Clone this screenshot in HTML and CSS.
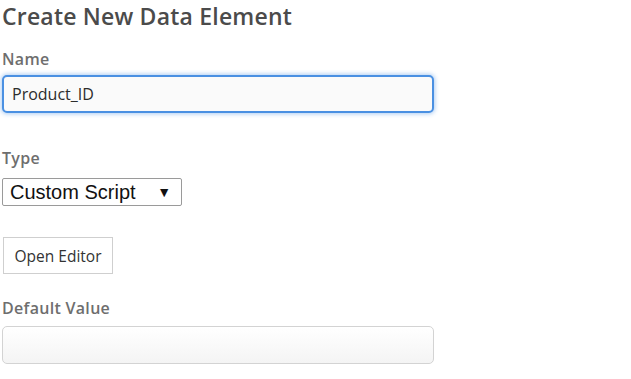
FILE: index.html
```html
<!DOCTYPE html>
<html>
<head>
<meta charset="utf-8">
<link rel="stylesheet" href="styles.css">
</head>
<body>
<div class="page">
  <h1 class="title">Create New Data Element</h1>
  <label class="label label-name">Name</label>
  <div class="input input-focus">Product_ID</div>
  <label class="label label-type">Type</label>
  <div class="select"><span>Custom Script</span><span class="arrow">▼</span></div>
  <button class="btn">Open Editor</button>
  <label class="label label-default">Default Value</label>
  <div class="input input-empty"></div>
</div>
</body>
</html>
```

FILE: styles.css
```css
html, body {
  margin: 0;
  padding: 0;
  background: #ffffff;
}
.page {
  display: flex;
  flex-direction: column;
  align-items: flex-start;
  padding-left: 2px;
  font-family: "Open Sans", sans-serif;
}
.title {
  margin: 0;
  font-size: 23px;
  font-weight: 600;
  letter-spacing: 0.2px;
  color: #4b4b4b;
  line-height: 32px;
}
.label {
  display: block;
  font-size: 16px;
  font-weight: 600;
  letter-spacing: 0.3px;
  color: #6e6e6e;
  line-height: 22px;
}
.label-name { margin-top: 16px; }
.label-type { margin-top: 34px; }
.label-default { margin-top: 23px; }
.input {
  box-sizing: border-box;
  width: 432px;
  height: 38px;
  border-radius: 5px;
  border: 1px solid #d3d3d3;
  background: linear-gradient(#ffffff, #f4f4f4);
  font-size: 16px;
  line-height: 36px;
  padding-left: 9px;
  color: #2c2c2c;
}
.input-focus {
  margin-top: 5px;
  border: 2px solid #4a90e2;
  line-height: 34px;
  padding-left: 8px;
  background: #fafafa;
  box-shadow: 0 0 4px 1px rgba(74, 144, 226, 0.45);
}
.input-empty { margin-top: 7px; }
.select {
  box-sizing: border-box;
  margin-top: 9px;
  width: 180px;
  height: 28px;
  border: 1px solid #9a9a9a;
  border-radius: 2px;
  display: flex;
  align-items: center;
  justify-content: space-between;
  padding: 0 10px 0 7px;
  font-family: "Liberation Sans", Arial, sans-serif;
  font-size: 20px;
  color: #111;
}
.arrow {
  font-size: 14px;
  color: #111;
}
.btn {
  margin: 31px 0 0 1px;
  box-sizing: border-box;
  width: 110px;
  height: 37px;
  border: 1px solid #cfcfcf;
  background: #ffffff;
  font-family: "Open Sans", sans-serif;
  font-size: 15.5px;
  color: #333;
  padding: 0;
}
```
